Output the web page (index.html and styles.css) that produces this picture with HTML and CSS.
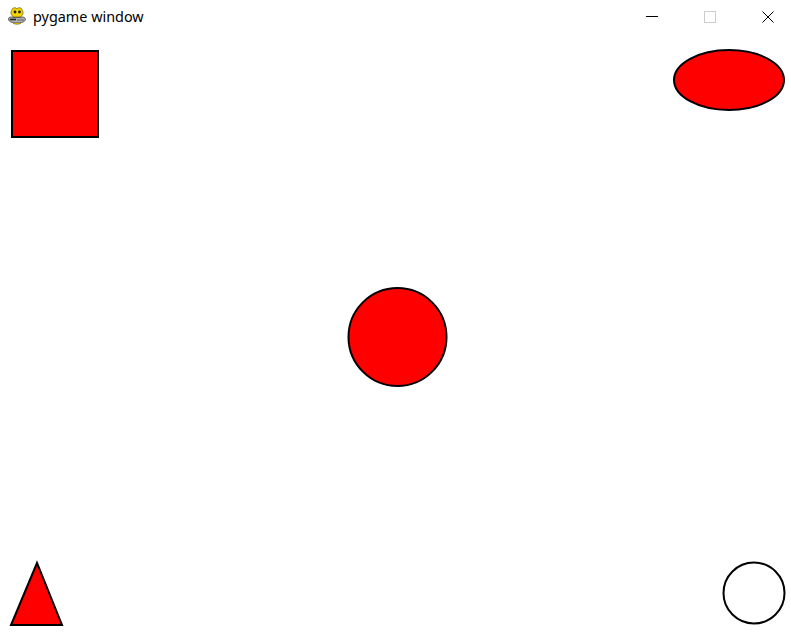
FILE: index.html
```html
<!DOCTYPE html>
<html>
<head>
<meta charset="utf-8">
<link rel="stylesheet" href="styles.css">
</head>
<body>
<div class="window">
  <div class="titlebar">
    <svg class="app-icon" width="20" height="18" viewBox="0 0 20 18">
      <path d="M5 3 C5 0.5 9 0 10 2 C11 0 15 0.5 15 3 C17 5 16 9 13 10 L7 10 C4 9 3 5 5 3 Z" fill="#f4d400" stroke="#7a6a00" stroke-width="0.8"/>
      <circle cx="8" cy="5" r="1.4" fill="#222"/>
      <circle cx="12.5" cy="5" r="1.4" fill="#222"/>
      <path d="M1.5 12 C1.5 10 4 9.5 7 10.5 L13 10.5 C15 9.5 18.5 10 18.5 12.5 C18 15 14 16 10 16 C6 16 1.5 15 1.5 12 Z" fill="#b0b0b0" stroke="#444" stroke-width="0.8"/>
      <path d="M3 12.5 H9" stroke="#222" stroke-width="1.6"/>
      <path d="M10 13 H17" stroke="#666" stroke-width="1"/>
      <path d="M6 16 C7 17.5 13 17.5 14 16" fill="#f4d400" stroke="#7a6a00" stroke-width="0.8"/>
    </svg>
    <span class="title">pygame window</span>
    <div class="controls">
      <svg class="ctl" width="12" height="12" viewBox="0 0 12 12"><path d="M0 5.5 H12" stroke="#000" stroke-width="1"/></svg>
      <svg class="ctl" width="12" height="12" viewBox="0 0 12 12"><rect x="0.5" y="0.5" width="11" height="11" fill="none" stroke="#cccccc" stroke-width="1"/></svg>
      <svg class="ctl" width="12" height="12" viewBox="0 0 12 12"><path d="M0.5 0.5 L11.5 11.5 M11.5 0.5 L0.5 11.5" stroke="#000" stroke-width="1"/></svg>
    </div>
  </div>
  <svg class="canvas" width="791" height="602" viewBox="0 0 791 602">
    <rect x="12" y="20" width="86" height="86" fill="#ff0000" stroke="#000" stroke-width="2"/>
    <ellipse cx="729" cy="49" rx="55" ry="30" fill="#ff0000" stroke="#000" stroke-width="2"/>
    <circle cx="397.5" cy="306" r="49" fill="#ff0000" stroke="#000" stroke-width="2"/>
    <polygon points="37,532 11,594 62,594" fill="#ff0000" stroke="#000" stroke-width="2"/>
    <circle cx="754" cy="562" r="30.5" fill="#ffffff" stroke="#000" stroke-width="2"/>
  </svg>
</div>
</body>
</html>
```
FILE: styles.css
```css
html, body {
  margin: 0;
  padding: 0;
  background: #ffffff;
}
.window {
  width: 791px;
  height: 633px;
  overflow: hidden;
  display: flex;
  flex-direction: column;
}
.titlebar {
  height: 31px;
  display: flex;
  align-items: center;
  padding-left: 7px;
  box-sizing: border-box;
  flex: none;
}
.app-icon {
  flex: none;
  margin-top: 1px;
}
.title {
  font-family: "Noto Sans", "DejaVu Sans", sans-serif;
  font-size: 14.4px;
  color: #000;
  margin-left: 6px;
  margin-top: 2px;
}
.controls {
  margin-left: auto;
  display: flex;
  align-items: center;
  gap: 46px;
  padding-right: 17px;
  margin-top: 3px;
}
.ctl {
  display: block;
}
.canvas {
  display: block;
  flex: none;
}
```
